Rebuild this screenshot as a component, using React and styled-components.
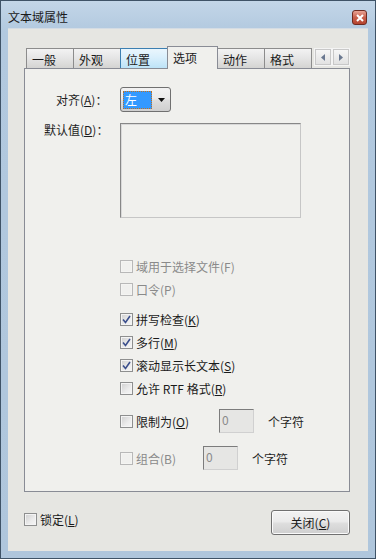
import React from 'react';
import styled, { createGlobalStyle, css } from 'styled-components';

const GlobalStyle = createGlobalStyle`
  html, body {
    margin: 0;
    padding: 0;
    background: #ffffff;
  }
  body {
    font-family: "Noto Sans CJK SC", "Noto Sans", sans-serif;
    font-size: 12px;
    color: #1e1e1e;
  }
`;

const tabs = [
  { label: '一般' },
  { label: '外观' },
  { label: '位置', hover: true },
  { label: '选项', active: true },
  { label: '动作' },
  { label: '格式' },
];

function Check({ checked, disabled }) {
  return (
    <Box $disabled={disabled}>
      {checked && (
        <svg width='9' height='9' viewBox='0 0 9 9'>
          <path d='M1 4.5 L3.5 7.5 L8 1' fill='none' stroke='#3b4f8c' strokeWidth='1.6' />
        </svg>
      )}
    </Box>
  );
}

function Option({ checked, disabled, children }) {
  return (
    <OptionRow $disabled={disabled}>
      <Check checked={checked} disabled={disabled} />
      <span>{children}</span>
    </OptionRow>
  );
}

export default function App() {
  return (
    <>
      <GlobalStyle />
      <Window>
        <TitleBar>
          <Title>文本域属性</Title>
          <CloseX>
            <svg width='8' height='8' viewBox='0 0 8 8'>
              <path d='M1 1 L7 7 M7 1 L1 7' stroke='#fff' strokeWidth='2' />
            </svg>
          </CloseX>
        </TitleBar>
        <Client>
          <TabStrip>
            {tabs.map((t) => (
              <Tab key={t.label} $active={t.active} $hover={t.hover}>
                {t.label}
              </Tab>
            ))}
            <Arrows>
              <ArrowBtn>
                <svg width='4' height='7' viewBox='0 0 4 7'>
                  <path d='M4 0 L0 3.5 L4 7 Z' fill='#6a7890' />
                </svg>
              </ArrowBtn>
              <ArrowBtn>
                <svg width='4' height='7' viewBox='0 0 4 7'>
                  <path d='M0 0 L4 3.5 L0 7 Z' fill='#6a7890' />
                </svg>
              </ArrowBtn>
            </Arrows>
          </TabStrip>
          <Panel>
            <FieldGrid>
              <Label>
                对齐(<u>A</u>)：
              </Label>
              <Select>
                <SelectValue>左</SelectValue>
                <SelectArrow>
                  <svg width='7' height='4' viewBox='0 0 7 4'>
                    <path d='M0 0 L7 0 L3.5 4 Z' fill='#111' />
                  </svg>
                </SelectArrow>
              </Select>
              <Label $top>
                默认值(<u>D</u>)：
              </Label>
              <TextArea />
            </FieldGrid>

            <Group $gap={37}>
              <Option disabled>域用于选择文件(F)</Option>
              <Option disabled>口令(P)</Option>
            </Group>

            <Group $gap={7}>
              <Option checked>
                拼写检查(<u>K</u>)
              </Option>
              <Option checked>
                多行(<u>M</u>)
              </Option>
              <Option checked>
                滚动显示长文本(<u>S</u>)
              </Option>
              <Option>
                允许 RTF 格式(<u>R</u>)
              </Option>
            </Group>

            <LimitRow $top={9}>
              <OptionRow>
                <Check />
                <span>
                  限制为(<u>O</u>)
                </span>
              </OptionRow>
              <NumInput $left={30}>0</NumInput>
              <Unit>个字符</Unit>
            </LimitRow>
            <LimitRow $top={13}>
              <OptionRow $disabled>
                <Check disabled />
                <span>组合(B)</span>
              </OptionRow>
              <NumInput $left={27}>0</NumInput>
              <Unit>个字符</Unit>
            </LimitRow>
          </Panel>
          <Footer>
            <OptionRow>
              <Check />
              <span>
                锁定(<u>L</u>)
              </span>
            </OptionRow>
            <Button>
              关闭(<u>C</u>)
            </Button>
          </Footer>
        </Client>
      </Window>
    </>
  );
}

const Window = styled.div`
  box-sizing: border-box;
  width: 376px;
  height: 559px;
  border: 1px solid #3f5367;
  background: linear-gradient(180deg, #c3d6e8 0%, #b2c9df 30px, #afc6dc 100%);
  display: flex;
  flex-direction: column;
  padding: 0 7px 7px;
`;

const TitleBar = styled.div`
  height: 27px;
  display: flex;
  align-items: center;
  justify-content: space-between;
`;

const Title = styled.div`
  font-size: 12px;
  color: #1a1a1a;
  margin-top: 3px;
`;

const CloseX = styled.div`
  box-sizing: border-box;
  width: 15px;
  height: 15px;
  margin-right: 1px;
  margin-top: 6px;
  border: 1px solid #6e2a20;
  border-radius: 3px;
  background: linear-gradient(180deg, #e8a394 0%, #c9604c 50%, #b4432f 100%);
  display: flex;
  align-items: center;
  justify-content: center;
`;

const Client = styled.div`
  flex: 1;
  background: #e6e6e2;
  display: flex;
  flex-direction: column;
  padding: 17px 18px 0 16px;
  border-top: 1px solid #d4dce4;
`;

const TabStrip = styled.div`
  display: flex;
  align-items: flex-end;
  height: 22px;
  padding-left: 2px;
  position: relative;
  z-index: 1;
`;

const Tab = styled.div`
  box-sizing: border-box;
  width: 48px;
  height: 20px;
  margin-right: -1px;
  border: 1px solid #8c8c8c;
  border-bottom: none;
  background: linear-gradient(180deg, #f3f3f3 0%, #e6e6e6 45%, #d4d4d2 100%);
  padding: 3px 0 0 5px;
  font-size: 12px;
  line-height: 15px;
  color: #1a1a1a;
  ${({ $hover }) =>
    $hover &&
    css`
      border-color: #3c7fb1;
      background: linear-gradient(180deg, #eaf6fd 0%, #d9effc 45%, #bde3f7 100%);
      position: relative;
      z-index: 1;
    `}
  ${({ $active }) =>
    $active &&
    css`
      width: 51px;
      height: 23px;
      margin-bottom: -1px;
      background: #f0f0ed;
      border-color: #898c95;
      padding-top: 3px;
      position: relative;
      z-index: 2;
    `}
`;

const Arrows = styled.div`
  display: flex;
  gap: 2px;
  margin-left: 3px;
  margin-bottom: 2px;
  padding: 1px;
  background: #f4f4f4;
`;

const ArrowBtn = styled.div`
  box-sizing: border-box;
  width: 16px;
  height: 16px;
  border: 1px solid #c8c8c8;
  background: linear-gradient(180deg, #f6f6f6, #e2e2e2);
  display: flex;
  align-items: center;
  justify-content: center;
`;

const Panel = styled.div`
  box-sizing: border-box;
  height: 424px;
  border: 1px solid #898c95;
  background: #f0f0ed;
  padding: 18px 0 0 0;
`;

const FieldGrid = styled.div`
  display: grid;
  grid-template-columns: 95px 180px;
  grid-template-rows: 25px 95px;
  row-gap: 11px;
  align-items: center;
`;

const Label = styled.div`
  justify-self: start;
  padding-left: ${({ $top }) => ($top ? '19px' : '31px')};
  align-self: ${({ $top }) => ($top ? 'start' : 'center')};
  margin-top: ${({ $top }) => ($top ? '-1px' : '0')};
  line-height: 16px;
  white-space: nowrap;
  u {
    text-underline-offset: 1px;
  }
`;

const Select = styled.div`
  box-sizing: border-box;
  width: 51px;
  height: 25px;
  border: 1px solid #707070;
  border-radius: 3px;
  background: linear-gradient(180deg, #f2f2f2 0%, #ebebeb 45%, #dddddd 55%, #cfcfcf 100%);
  display: flex;
  align-items: center;
  padding-left: 2px;
`;

const SelectValue = styled.div`
  box-sizing: border-box;
  width: 29px;
  height: 18px;
  background: #3399ff;
  outline: 1px dotted #c07020;
  outline-offset: -1px;
  color: #ffffff;
  font-size: 12px;
  line-height: 17px;
  padding-left: 2px;
`;

const SelectArrow = styled.div`
  flex: 1;
  display: flex;
  justify-content: center;
  padding-top: 1px;
`;

const TextArea = styled.div`
  box-sizing: border-box;
  width: 181px;
  height: 95px;
  align-self: start;
  border: 1px solid #c6c6c6;
  border-top-color: #878787;
  border-left-color: #878787;
  box-shadow: inset 1px 1px 0 #d8d8d8;
  background: #f0f0ed;
`;

const Group = styled.div`
  margin: ${({ $gap }) => $gap}px 0 0 95px;
  display: flex;
  flex-direction: column;
`;

const OptionRow = styled.label`
  display: flex;
  align-items: center;
  height: 23px;
  gap: 3px;
  font-size: 12px;
  color: ${({ $disabled }) => ($disabled ? '#8a8a8a' : '#1a1a1a')};
  white-space: nowrap;
  u {
    text-underline-offset: 1px;
  }
`;

const Box = styled.span`
  box-sizing: border-box;
  width: 13px;
  height: 13px;
  border: 1px solid ${({ $disabled }) => ($disabled ? '#b8b8b8' : '#8e8f8f')};
  background: ${({ $disabled }) =>
    $disabled ? '#f0f0ee' : 'linear-gradient(135deg, #cfcfcf 0%, #ececec 60%, #f6f6f6 100%)'};
  box-shadow: inset 0 0 0 1px ${({ $disabled }) => ($disabled ? '#f4f4f2' : '#f4f4f4')};
  display: flex;
  align-items: center;
  justify-content: center;
`;

const LimitRow = styled.div`
  display: flex;
  align-items: center;
  margin: ${({ $top }) => $top}px 0 0 95px;
  height: 24px;
`;

const NumInput = styled.div`
  box-sizing: border-box;
  width: 35px;
  height: 24px;
  margin-left: ${({ $left }) => $left}px;
  border: 1px solid #d0d0d0;
  border-top-color: #7c7c7c;
  border-left-color: #7c7c7c;
  background: #e6e6e4;
  color: #8a8a8a;
  font-size: 12px;
  line-height: 20px;
  padding-left: 2px;
`;

const Unit = styled.div`
  margin-left: 14px;
  font-size: 12px;
`;

const Footer = styled.div`
  display: flex;
  justify-content: space-between;
  align-items: center;
  padding: 18px 0 0 0;
  height: 24px;
  > label {
    margin-top: -6px;
  }
`;

const Button = styled.div`
  box-sizing: border-box;
  width: 79px;
  height: 25px;
  margin-right: 0px;
  border: 1px solid #707070;
  border-radius: 3px;
  background: linear-gradient(180deg, #f2f2f2 0%, #ebebeb 45%, #dddddd 55%, #cfcfcf 100%);
  box-shadow: inset 0 0 0 1px #fafafa;
  display: flex;
  align-items: center;
  justify-content: center;
  font-size: 12px;
  color: #1a1a1a;
  u {
    text-underline-offset: 1px;
  }
`;
